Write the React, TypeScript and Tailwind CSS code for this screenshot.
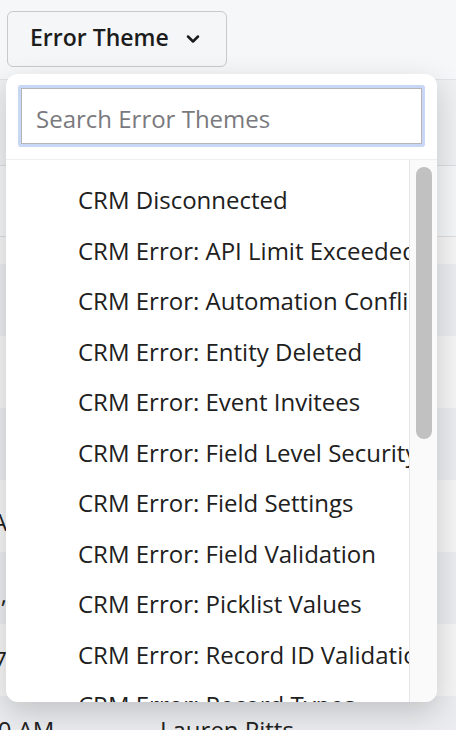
import { ChevronDown } from 'lucide-react';

const themes = [
  'CRM Disconnected',
  'CRM Error: API Limit Exceeded',
  'CRM Error: Automation Conflict',
  'CRM Error: Entity Deleted',
  'CRM Error: Event Invitees',
  'CRM Error: Field Level Security',
  'CRM Error: Field Settings',
  'CRM Error: Field Validation',
  'CRM Error: Picklist Values',
  'CRM Error: Record ID Validation',
  'CRM Error: Record Types',
];

const rows = [
  { bg: 'bg-[#ebecef]', text: '', pad: 'pt-[12px]' },
  { bg: 'bg-[#f5f5f6]', text: '', pad: 'pt-[12px]' },
  { bg: 'bg-[#ebecef]', text: '', pad: 'pt-[12px]' },
  { bg: 'bg-[#f5f5f6]', text: 'A', pad: 'pt-[12px]' },
  { bg: 'bg-[#ebecef]', text: ',', pad: 'pt-[12px]' },
  { bg: 'bg-[#f5f5f6]', text: '7', pad: 'pt-[0px]' },
];

export default function App() {
  return (
    <div
      className="relative w-[456px] h-[730px] overflow-hidden bg-[#f6f7f9] text-[#1f1f1f]"
      style={{ fontFamily: '"Open Sans", "Liberation Sans", sans-serif' }}
    >
      {/* page behind the menu */}
      <div className="h-[80px] px-[7px] pt-[11px] border-b border-[#e2e3e6]">
        <button className="h-[56px] w-[220px] flex items-center gap-[14px] pl-[22px] pb-[4px] rounded-[6px] border border-[#c9c9cb] bg-[#f5f6f8] text-[23px] font-semibold text-[#1c1c1c]">
          Error Theme
          <ChevronDown className="w-[20px] h-[20px] mt-[4px]" strokeWidth={3} />
        </button>
      </div>
      <div className="h-[86px] bg-[#eef0f2] border-b border-[#dcdde0]" />
      <div className="h-[71px] bg-[#f5f6f7] border-b border-[#dcdde0]" />
      <div className="h-[27px] bg-[#f5f5f6]" />
      {rows.map((r, i) => (
        <div key={i} className={`h-[72px] flex items-center text-[24px] ${r.pad} ${r.bg}`}>
          <span className="-ml-[8px] w-[15px] overflow-hidden text-right">{r.text}</span>
        </div>
      ))}
      <div className="h-[72px] bg-[#ebecef] flex items-start pt-[16px] text-[24px] text-[#222]">
        <span className="-ml-[16px] w-[176px]">10 AM</span>
        <span>Lauren Pitts</span>
      </div>

      {/* dropdown menu */}
      <div className="absolute left-[6px] top-[74px] w-[431px] h-[628px] rounded-[12px] bg-white shadow-[0_10px_30px_rgba(0,0,0,0.18)] overflow-hidden flex flex-col">
        <div className="h-[86px] px-[12px] pt-[11px] border-b border-[#efefef]">
          <div className="h-[62px] rounded-[3px] border-[3px] border-[#c8d7f6]">
            <div className="h-full border border-[#b5b5b5] flex items-center px-[14px] pt-[5px] text-[24px] text-[#7a7a7e]">
              Search Error Themes
            </div>
          </div>
        </div>
        <div className="flex-1 flex min-h-0">
          <div className="flex-1 overflow-hidden pt-[15px]">
            {themes.map((t) => (
              <div
                key={t}
                className="h-[50.5px] flex items-center pl-[72px] whitespace-nowrap text-[24px] text-[#202020]"
              >
                {t}
              </div>
            ))}
          </div>
          <div className="w-[28px] bg-[#fafafa] border-l border-[#e6e6e6] pt-[7px] flex justify-center">
            <div className="w-[16px] h-[272px] rounded-full bg-[#c1c1c1]" />
          </div>
        </div>
      </div>
    </div>
  );
}
